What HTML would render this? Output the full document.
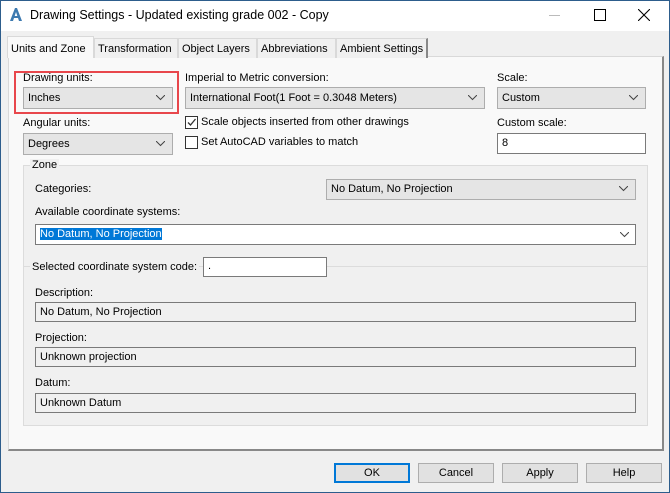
<!DOCTYPE html><html><head><style>
*{box-sizing:border-box}
body{margin:0;width:670px;height:493px;overflow:hidden;font-family:"Liberation Sans",sans-serif;font-size:11px;color:#000}
.win{position:absolute;left:0;top:0;width:670px;height:493px;background:#f0f0f0}
.frame{position:absolute;left:0;top:0;width:670px;height:493px;border:1px solid #2d5d8c;pointer-events:none}
.title{position:absolute;left:0;top:0;width:670px;height:31px;background:#fff}
.a{position:absolute}
.lbl{position:absolute;white-space:nowrap}
.cb{position:absolute;background:#e5e5e5;border:1px solid #adadad;padding:4px 0 0 4px;white-space:nowrap}
.cb svg{position:absolute;right:7px;top:7px}
.box{position:absolute;border:1px solid #7a7a7a;background:#f0f0f0;padding:3px 0 0 4px;white-space:nowrap}
.btn{position:absolute;top:463px;width:76px;height:20px;background:#e1e1e1;border:1px solid #adadad;text-align:center;line-height:18px}
.tab{position:absolute;top:38px;height:20px;border:1px solid #d9d9d9;border-bottom:none;background:#f0f0f0;padding:4px 3px 0;white-space:nowrap}
.chk{position:absolute;width:13px;height:13px;border:1px solid #333;background:#fff}
</style></head><body><div class="win">
<div class="title"></div>
<svg class="a" style="left:9px;top:7px" width="14" height="16"><path d="M1 14 L6 1 H8 L13 14 H10 L7 5 L4 14Z" fill="#3d7ab0"/><rect x="4" y="9" width="6" height="2" fill="#3d7ab0"/></svg>
<div class="lbl" style="left:30px;top:8px;font-size:12.5px">Drawing Settings - Updated existing grade 002 - Copy</div>
<div class="a" style="left:549px;top:15px;width:11px;height:1px;background:#bbb"></div>
<div class="a" style="left:594px;top:9px;width:12px;height:12px;border:1px solid #000"></div>
<svg class="a" style="left:638px;top:9px" width="12" height="12"><path d="M0 0L12 12M12 0L0 12" stroke="#000" stroke-width="1.1"/></svg>
<div class="a" style="left:8px;top:56px;width:656px;height:395px;background:#f9f9f9;border:1px solid #d9d9d9;border-right:2px solid #888;border-bottom:2px solid #888"></div>
<div class="tab" style="left:7px;top:36px;height:22px;background:#f9f9f9;padding-top:6px;width:87px">Units and Zone</div>
<div class="tab" style="left:94px;width:84px">Transformation</div>
<div class="tab" style="left:178px;width:79px">Object Layers</div>
<div class="tab" style="left:257px;width:79px">Abbreviations</div>
<div class="tab" style="left:336px;border-right:2px solid #888;width:92px">Ambient Settings</div>
<div class="lbl" style="left:23px;top:72px">Drawing units:</div>
<div class="cb" style="left:23px;top:87px;width:150px;height:22px">Inches<svg width="9" height="6"><path d="M0 0L4.5 4.5L9 0" fill="none" stroke="#444"/></svg></div>
<div class="a" style="left:14px;top:71px;width:165px;height:43px;border:2px solid #e8474c"></div>
<div class="lbl" style="left:185px;top:72px">Imperial to Metric conversion:</div>
<div class="cb" style="left:185px;top:87px;width:300px;height:22px">International Foot(1 Foot = 0.3048 Meters)<svg width="9" height="6"><path d="M0 0L4.5 4.5L9 0" fill="none" stroke="#444"/></svg></div>
<div class="lbl" style="left:497px;top:72px">Scale:</div>
<div class="cb" style="left:497px;top:87px;width:149px;height:22px">Custom<svg width="9" height="6"><path d="M0 0L4.5 4.5L9 0" fill="none" stroke="#444"/></svg></div>
<div class="lbl" style="left:23px;top:117px">Angular units:</div>
<div class="cb" style="left:23px;top:133px;width:150px;height:22px">Degrees<svg width="9" height="6"><path d="M0 0L4.5 4.5L9 0" fill="none" stroke="#444"/></svg></div>
<div class="chk" style="left:185px;top:116px"><svg width="11" height="11" style="position:absolute;left:0;top:0"><path d="M2 5.5L4.5 8L9.5 2" fill="none" stroke="#333" stroke-width="1.3"/></svg></div>
<div class="lbl" style="left:201px;top:116px">Scale objects inserted from other drawings</div>
<div class="chk" style="left:185px;top:136px"></div>
<div class="lbl" style="left:201px;top:136px">Set AutoCAD variables to match</div>
<div class="lbl" style="left:497px;top:117px">Custom scale:</div>
<div class="box" style="left:497px;top:133px;width:149px;height:21px;background:#fff">8</div>
<div class="a" style="left:23px;top:165px;width:625px;height:261px;background:#f0f0f0;border:1px solid #dcdcdc"></div>
<div class="lbl" style="left:30px;top:159px;background:#f0f0f0;padding:0 2px">Zone</div>
<div class="lbl" style="left:35px;top:183px">Categories:</div>
<div class="cb" style="left:326px;top:179px;width:310px;height:21px;padding-top:3px">No Datum, No Projection<svg width="9" height="6" style="top:6px"><path d="M0 0L4.5 4.5L9 0" fill="none" stroke="#444"/></svg></div>
<div class="lbl" style="left:35px;top:206px">Available coordinate systems:</div>
<div class="box" style="left:35px;top:224px;width:601px;height:21px;background:#fff"><span style="background:#0078d7;color:#fff">No Datum, No Projection</span><svg width="9" height="6" style="position:absolute;right:6px;top:7px"><path d="M0 0L4.5 4.5L9 0" fill="none" stroke="#444"/></svg></div>
<div class="a" style="left:24px;top:266px;width:623px;height:1px;background:#dcdcdc"></div>
<div class="lbl" style="left:30px;top:261px;background:#f0f0f0;padding:0 2px">Selected coordinate system code:</div>
<div class="box" style="left:203px;top:257px;width:124px;height:20px;background:#fff;padding-top:2px">.</div>
<div class="lbl" style="left:35px;top:287px">Description:</div>
<div class="box" style="left:35px;top:302px;width:601px;height:20px">No Datum, No Projection</div>
<div class="lbl" style="left:35px;top:332px">Projection:</div>
<div class="box" style="left:35px;top:347px;width:601px;height:20px">Unknown projection</div>
<div class="lbl" style="left:35px;top:377px">Datum:</div>
<div class="box" style="left:35px;top:393px;width:601px;height:20px">Unknown Datum</div>
<div class="btn" style="left:334px;border:2px solid #0078d7;line-height:16px">OK</div>
<div class="btn" style="left:418px">Cancel</div>
<div class="btn" style="left:502px">Apply</div>
<div class="btn" style="left:586px">Help</div>
<div class="frame"></div>
</div></body></html>
